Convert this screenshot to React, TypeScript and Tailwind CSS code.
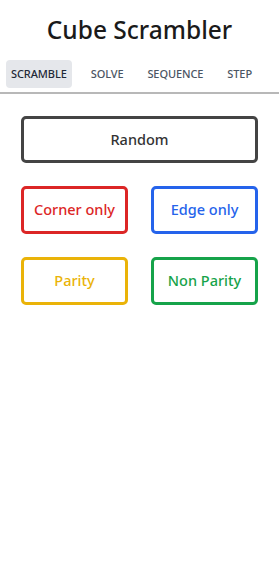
import React from "react";

export default function App() {
  const tabs = ["SCRAMBLE", "SOLVE", "SEQUENCE", "STEP"];
  return (
    <div className="w-[279px] h-[562px] bg-white" style={{ fontFamily: '"Noto Sans", "Open Sans", sans-serif' }}>
      <h1 className="pt-[12px] text-center text-[24.5px] leading-[36px] font-medium text-[#1a1a1a]">Cube Scrambler</h1>
      <div className="mt-[12px] flex items-center pl-[6px] gap-[14px] border-b-2 border-[#b8b8b8] pb-[4px]">
        {tabs.map((t, i) => (
          <div
            key={t}
            className={
              "h-[28px] px-[5px] rounded-[4px] flex items-center text-[11px] font-medium tracking-[-0.1px] " +
              (i === 0 ? "bg-[#e5e7eb] text-[#1f2937]" : "text-[#4b5563]")
            }
          >
            {t}
          </div>
        ))}
      </div>
      <div className="mt-[22px] px-[21px] grid grid-cols-2 gap-x-[23px] gap-y-[23px]">
        <button className="col-span-2 h-[47px] border-[3px] border-[#444444] rounded-[5px] text-[14.5px] font-medium text-[#333333]">Random</button>
        <button className="h-[48px] border-[3px] border-[#dc2626] rounded-[5px] text-[14.5px] font-medium text-[#dc2626]">Corner only</button>
        <button className="h-[48px] border-[3px] border-[#2563eb] rounded-[5px] text-[14.5px] font-medium text-[#2563eb]">Edge only</button>
        <button className="h-[48px] border-[3px] border-[#eab308] rounded-[5px] text-[14.5px] font-medium text-[#eab308]">Parity</button>
        <button className="h-[48px] border-[3px] border-[#16a34a] rounded-[5px] text-[14.5px] font-medium text-[#16a34a]">Non Parity</button>
      </div>
    </div>
  );
}
